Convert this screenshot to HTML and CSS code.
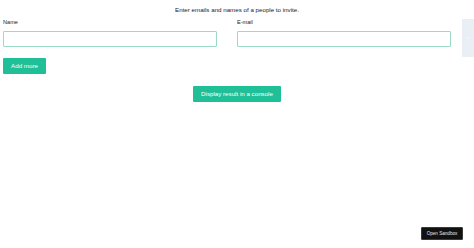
FILE: index.html
```html
<!DOCTYPE html>
<html>
<head>
<meta charset="utf-8">
<link rel="stylesheet" href="styles.css">
</head>
<body>
<div class="app">
  <p class="title">Enter emails and names of a people to invite.</p>
  <div class="row">
    <div class="field">
      <label class="label">Name</label>
      <input class="input" type="text">
    </div>
    <div class="field">
      <label class="label">E-mail</label>
      <input class="input" type="text">
    </div>
    <div class="side"><span class="dot"></span></div>
  </div>
  <button class="btn add">Add more</button>
  <div class="center">
    <button class="btn display">Display result in a console</button>
  </div>
</div>
<a class="sandbox">Open Sandbox</a>
</body>
</html>
```
FILE: styles.css
```css
html, body {
  margin: 0;
  padding: 0;
  background: #ffffff;
  overflow: hidden;
}
body {
  font-family: "Liberation Sans", Arial, sans-serif;
  color: #1a1a1a;
  width: 474px;
  height: 248px;
}
.app {
  padding: 0 0 0 3px;
}
.title {
  margin: 0;
  padding-top: 6px;
  height: 10px;
  font-size: 6.2px;
  line-height: 8px;
  text-align: center;
  padding-right: 3px;
}
.row {
  display: flex;
  align-items: flex-start;
  margin-top: 1px;
}
.field {
  display: flex;
  flex-direction: column;
  width: 214px;
}
.field + .field {
  margin-left: 20px;
}
.label {
  font-size: 5.6px;
  line-height: 8px;
  height: 8px;
  margin-top: 1px;
  margin-bottom: 5px;
}
.input {
  box-sizing: border-box;
  width: 214px;
  height: 16px;
  margin: 0;
  border: 1px solid #9bdac6;
  border-radius: 1px;
  padding: 0 3px;
  background: #fff;
  outline: none;
}
.side {
  flex: none;
  width: 16px;
  height: 38px;
  margin-left: 11px;
  margin-top: 2px;
  background: #e9eff4;
  display: flex;
  align-items: center;
  justify-content: center;
}
.dot {
  width: 1px;
  height: 2px;
  background: #f6f9fb;
  margin-right: 4px;
}
.btn {
  display: block;
  box-sizing: border-box;
  height: 16px;
  border: none;
  border-radius: 1px;
  background: #1fbf98;
  color: #ffffff;
  font-family: "Liberation Sans", Arial, sans-serif;
  font-size: 6.2px;
  line-height: 16px;
  padding: 0;
  margin: 0;
  text-align: center;
}
.add {
  width: 43px;
  margin-top: 1px;
}
.center {
  display: flex;
  justify-content: center;
  padding-right: 3px;
  margin-top: 12px;
}
.display {
  width: 88px;
}
.sandbox {
  position: fixed;
  right: 11px;
  bottom: 8px;
  width: 42px;
  height: 13px;
  box-sizing: border-box;
  background: #111111;
  border: 1px solid #3a3a3a;
  border-radius: 1px;
  color: #e8e8e8;
  font-size: 4.6px;
  line-height: 11px;
  text-align: center;
  white-space: nowrap;
}
```
